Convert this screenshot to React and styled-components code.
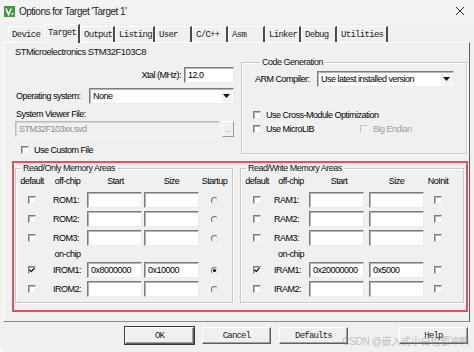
import styled, { createGlobalStyle, css } from "styled-components";

const SANS = `"Liberation Sans", Arial, sans-serif`;
const MONO = `"Liberation Mono", "Courier New", monospace`;

const GlobalStyle = createGlobalStyle`
  html, body {
    margin: 0;
    padding: 0;
    background: #ffffff;
  }
  * {
    box-sizing: border-box;
  }
`;

const Window = styled.div`
  width: 474px;
  height: 352px;
  background: #f0f0f0;
  display: flex;
  flex-direction: column;
  position: relative;
  overflow: hidden;
  border-bottom-left-radius: 6px;
  font-family: ${SANS};
  font-size: 9px;
  letter-spacing: -0.5px;
  color: #000;
`;

const TitleBar = styled.div`
  height: 22px;
  display: flex;
  align-items: center;
  padding: 0 9px 0 4px;
  background: #f3f3f3;
`;

const Title = styled.span`
  flex: 1;
  margin-left: 4px;
  font-size: 10px;
  color: #1b1b1b;
`;

const TabStrip = styled.div`
  height: 20px;
  display: flex;
  align-items: flex-end;
  padding-left: 8px;
`;

const Tab = styled.div`
  position: relative;
  z-index: ${(p) => (p.$active ? 1 : 0)};
  width: ${(p) => p.$w}px;
  height: ${(p) => (p.$active ? 19 : 16)}px;
  margin-bottom: ${(p) => (p.$active ? -1 : 0)}px;
  padding: ${(p) => (p.$active ? "0 0 2px 3px" : "0 0 0 3px")};
  display: flex;
  align-items: center;
  background: #f0f0f0;
  border-top: 1px solid #ffffff;
  border-left: 1px solid #ffffff;
  border-right: 2px solid ${(p) => (p.$shadow ? "#4a4a4a" : "transparent")};
  font-family: ${MONO};
  font-size: 9px;
  letter-spacing: -0.7px;
  color: #222;
  white-space: nowrap;
`;

const Panel = styled.div`
  margin: 0 4px 0 3px;
  padding: 3px 1px 9px 8px;
  border-top: 1px solid #ffffff;
  border-left: 1px solid #ffffff;
  border-right: 1px solid #5c5c5c;
  border-bottom: 1px solid #8c8c8c;
`;

const TopSection = styled.div`
  display: grid;
  grid-template-columns: 222px 226px;
  column-gap: 7px;
  align-items: start;
`;

const LeftCol = styled.div`
  display: flex;
  flex-direction: column;
  padding-left: 3px;
`;

const Text = styled.div`
  line-height: 12px;
  white-space: nowrap;
  padding-left: ${(p) => p.$indent || 0}px;
  color: ${(p) => (p.$disabled ? "#a0a0a0" : "#000")};
`;

const DeviceName = styled(Text)`
  font-size: 9.4px;
  color: #111;
`;

const XtalRow = styled.div`
  margin-top: 9px;
  height: 16px;
  display: flex;
  justify-content: flex-end;
  align-items: center;
  gap: 3px;
`;

const LabeledRow = styled.div`
  margin-top: ${(p) => p.$top || 0}px;
  height: 16px;
  display: grid;
  grid-template-columns: ${(p) => p.$cols};
  align-items: center;
  white-space: nowrap;
`;

const FieldLabel = styled(Text)`
  margin-top: 4px;
  padding-left: 1px;
`;

const BrowseRow = styled.div`
  margin-top: 1px;
  display: flex;
  gap: 2px;
`;

const sunken = css`
  background: #ffffff;
  border: 1px solid;
  border-color: #7d7d7d #ececec #ececec #7d7d7d;
  box-shadow: inset 1px 1px 0 #b4b4b4;
`;

const TextBox = styled.div`
  ${sunken};
  width: ${(p) => p.$w || "auto"};
  flex: ${(p) => (p.$w ? "none" : 1)};
  height: 16px;
  padding: 1px 0 0 3px;
  line-height: 12px;
  white-space: nowrap;
  overflow: hidden;
  ${(p) =>
    p.$disabled &&
    css`
      background: #f0f0f0;
      color: #8e8e8e;
      border-color: #bcbcbc #f4f4f4 #f4f4f4 #bcbcbc;
      box-shadow: inset 1px 1px 0 #d4d4d4;
    `}
`;

const SelectBox = styled.div`
  ${sunken};
  height: 16px;
  display: flex;
  align-items: center;
  padding: 0 1px 0 3px;
`;

const SelectValue = styled.span`
  flex: 1;
  white-space: nowrap;
`;

const DropArrow = styled.span`
  width: 11px;
  height: 12px;
  display: flex;
  align-items: center;
  justify-content: center;
  background: #f4f4f4;
`;

const BrowseButton = styled.div`
  width: 12px;
  height: 16px;
  display: flex;
  align-items: flex-end;
  justify-content: center;
  padding-bottom: 3px;
  background: #f0f0f0;
  border: 1px solid;
  border-color: #ffffff #9a9a9a #9a9a9a #ffffff;
  font-size: 7px;
  letter-spacing: 0;
  line-height: 6px;
  color: #8a8a8a;
`;

const CheckRow = styled.div`
  margin-top: ${(p) => p.$top || 0}px;
  margin-left: ${(p) => p.$indent || 0}px;
  height: 12px;
  display: flex;
  align-items: center;
  gap: 5px;
  white-space: nowrap;
`;

const Box = styled.span`
  ${sunken};
  width: 8px;
  height: 8px;
  flex: none;
  display: flex;
  align-items: center;
  justify-content: center;
  ${(p) =>
    p.$disabled &&
    css`
      background: #f0f0f0;
      border-color: #c4c4c4 #f6f6f6 #f6f6f6 #c4c4c4;
      box-shadow: none;
    `}
`;

const Radio = styled.span`
  width: 7px;
  height: 7px;
  border-radius: 50%;
  border: 1px solid;
  border-color: #6f6f6f #e8e8e8 #e8e8e8 #6f6f6f;
  background: #f0f0f0;
  display: grid;
  place-items: center;
  &::after {
    content: "";
    width: 3px;
    height: 3px;
    border-radius: 50%;
    background: ${(p) => (p.$on ? "#000" : "transparent")};
  }
`;

const Group = styled.fieldset`
  margin: ${(p) => p.$top || 0}px 0 0;
  padding: ${(p) => p.$pad};
  min-width: 0;
  border: 1px solid #c9c9c9;
  box-shadow: 1px 1px 0 #ffffff, inset 1px 1px 0 #ffffff;
`;

const Legend = styled.legend`
  margin-left: 5px;
  padding: 0 2px;
  line-height: ${(p) => p.$lh || 12}px;
  color: #111;
  white-space: nowrap;
`;

const CompilerRow = styled.div`
  height: 16px;
  display: grid;
  grid-template-columns: 62px 137px;
  align-items: center;
  white-space: nowrap;
`;

const EndianRow = styled.div`
  margin-top: 2px;
  margin-left: -2px;
  display: grid;
  grid-template-columns: 107px auto;
`;

const RedBox = styled.div`
  margin-top: 5px;
  padding: 0 1px 7px;
  border: 2px solid #e0525e;
  display: grid;
  grid-template-columns: 218px 224px;
  column-gap: 7px;
`;

const MemGrid = styled.div`
  display: grid;
  grid-template-columns: ${(p) => p.$cols};
  grid-template-rows: 13px 16px 16px 16px 10px 16px 16px;
  row-gap: 3px;
  align-items: center;
`;

const Head = styled.div`
  align-self: start;
  justify-self: center;
  line-height: 10px;
  white-space: nowrap;
`;

const Cell = styled.div`
  justify-self: ${(p) => p.$align || "center"};
  padding-left: ${(p) => p.$indent || 0}px;
  line-height: 10px;
  white-space: nowrap;
`;

const ButtonRow = styled.div`
  display: flex;
  gap: 8px;
  padding: 5px 6px 0 125px;
`;

const Button = styled.div`
  width: 69px;
  height: 17px;
  margin-left: ${(p) => (p.$push ? "auto" : 0)};
  display: flex;
  align-items: center;
  justify-content: center;
  background: #f0f0f0;
  border: 1px solid;
  border-color: #ffffff #5e5e5e #5e5e5e #ffffff;
  box-shadow: ${(p) =>
    p.$default ? "0 0 0 1px #3a3a3a, inset -1px -1px 0 #a0a0a0" : "inset -1px -1px 0 #a0a0a0"};
  font-family: ${MONO};
  font-size: 9px;
  letter-spacing: -0.8px;
  color: #222;
`;

const Watermark = styled.div`
  position: absolute;
  right: 5px;
  bottom: 4px;
  font-family: "Liberation Sans", "Noto Sans CJK SC", sans-serif;
  font-size: 10px;
  letter-spacing: -0.3px;
  color: rgba(140, 140, 140, 0.5);
  white-space: nowrap;
`;

const Check = ({ on, disabled }) => (
  <Box $disabled={disabled}>
    {on && (
      <svg width="6" height="6" viewBox="0 0 6 6">
        <path d="M0.6 2.8 L2.3 4.6 L5.4 1" stroke="#111" strokeWidth="1.3" fill="none" />
      </svg>
    )}
  </Box>
);

const Select = ({ value }) => (
  <SelectBox>
    <SelectValue>{value}</SelectValue>
    <DropArrow>
      <svg width="7" height="4" viewBox="0 0 7 4">
        <path d="M0 0 H7 L3.5 4 Z" fill="#111" />
      </svg>
    </DropArrow>
  </SelectBox>
);

const tabs = [
  { name: "Device", w: 36 },
  { name: "Target", w: 36 },
  { name: "Output", w: 35 },
  { name: "Listing", w: 40 },
  { name: "User", w: 37 },
  { name: "C/C++", w: 36 },
  { name: "Asm", w: 37 },
  { name: "Linker", w: 36 },
  { name: "Debug", w: 36 },
  { name: "Utilities", w: 51 },
];

const romRows = [
  { name: "ROM1:", def: false, start: "", size: "", last: false },
  { name: "ROM2:", def: false, start: "", size: "", last: false },
  { name: "ROM3:", def: false, start: "", size: "", last: false },
  null,
  { name: "IROM1:", def: true, start: "0x8000000", size: "0x10000", last: true },
  { name: "IROM2:", def: false, start: "", size: "", last: false },
];

const ramRows = [
  { name: "RAM1:", def: false, start: "", size: "" },
  { name: "RAM2:", def: false, start: "", size: "" },
  { name: "RAM3:", def: false, start: "", size: "" },
  null,
  { name: "IRAM1:", def: true, start: "0x20000000", size: "0x5000" },
  { name: "IRAM2:", def: false, start: "", size: "" },
];

const MemoryArea = ({ title, cols, indent, lastHead, rows, renderLast }) => (
  <Group $pad="3px 2px 5px 0">
    <Legend $lh={10}>{title}</Legend>
    <MemGrid $cols={cols}>
      <Head>default</Head>
      <Head>off-chip</Head>
      <Head>Start</Head>
      <Head>Size</Head>
      <Head>{lastHead}</Head>
      {rows.map((r, i) =>
        r
          ? [
              <Cell key={`d${i}`}>
                <Check on={r.def} />
              </Cell>,
              <Cell key={`n${i}`} $align="start" $indent={indent}>
                {r.name}
              </Cell>,
              <TextBox key={`s${i}`} $w="55px">
                {r.start}
              </TextBox>,
              <TextBox key={`z${i}`} $w="55px">
                {r.size}
              </TextBox>,
              <Cell key={`l${i}`}>{renderLast(r)}</Cell>,
            ]
          : [
              <span key={`e${i}`} />,
              <Cell key={`o${i}`}>on-chip</Cell>,
              <span key={`f${i}`} />,
              <span key={`g${i}`} />,
              <span key={`h${i}`} />,
            ]
      )}
    </MemGrid>
  </Group>
);

export default function App() {
  return (
    <>
      <GlobalStyle />
      <Window>
        <TitleBar>
          <svg width="11" height="11" viewBox="0 0 11 11">
            <rect width="11" height="11" fill="#3d9a3f" />
            <path d="M2 2.5 L4.6 8.5 L7.2 2.5" stroke="#fff" strokeWidth="1.5" fill="none" />
            <rect x="7.6" y="7" width="1.8" height="1.8" fill="#fff" />
          </svg>
          <Title>Options for Target 'Target 1'</Title>
          <svg width="10" height="10" viewBox="0 0 10 10">
            <path d="M1 1 L9 9 M9 1 L1 9" stroke="#2b2b2b" strokeWidth="1" />
          </svg>
        </TitleBar>

        <TabStrip>
          {tabs.map((t, i) => (
            <Tab key={t.name} $w={t.w} $active={i === 1} $shadow={i !== 0}>
              {t.name}
            </Tab>
          ))}
        </TabStrip>

        <Panel>
          <TopSection>
            <LeftCol>
              <DeviceName>STMicroelectronics STM32F103C8</DeviceName>
              <XtalRow>
                <span>Xtal (MHz):</span>
                <TextBox $w="50px">12.0</TextBox>
              </XtalRow>
              <LabeledRow $top={5} $cols="74px 1fr">
                <Text $indent={1}>Operating system:</Text>
                <Select value="None" />
              </LabeledRow>
              <FieldLabel>System Viewer File:</FieldLabel>
              <BrowseRow>
                <TextBox $disabled>STM32F103xx.svd</TextBox>
                <BrowseButton>...</BrowseButton>
              </BrowseRow>
              <CheckRow $top={7} $indent={6}>
                <Check />
                <span>Use Custom File</span>
              </CheckRow>
            </LeftCol>

            <Group $top={10} $pad="3px 10px 18px 13px">
              <Legend>Code Generation</Legend>
              <CompilerRow>
                <span>ARM Compiler:</span>
                <Select value="Use latest installed version" />
              </CompilerRow>
              <CheckRow $top={22} $indent={-2}>
                <Check />
                <span>Use Cross-Module Optimization</span>
              </CheckRow>
              <EndianRow>
                <CheckRow>
                  <Check />
                  <span>Use MicroLIB</span>
                </CheckRow>
                <CheckRow>
                  <Check disabled />
                  <Text $disabled>Big Endian</Text>
                </CheckRow>
              </EndianRow>
            </Group>
          </TopSection>

          <RedBox>
            <MemoryArea
              title="Read/Only Memory Areas"
              cols="32px 39px 57px 55px 31px"
              indent={5}
              lastHead="Startup"
              rows={romRows}
              renderLast={(r) => <Radio $on={r.last} />}
            />
            <MemoryArea
              title="Read/Write Memory Areas"
              cols="32px 36px 60px 55px 28px"
              indent={1}
              lastHead="NoInit"
              rows={ramRows}
              renderLast={() => <Check />}
            />
          </RedBox>
        </Panel>

        <ButtonRow>
          <Button $default>OK</Button>
          <Button>Cancel</Button>
          <Button>Defaults</Button>
          <Button $push>Help</Button>
        </ButtonRow>

        <Watermark>CSDN @嵌入式小白也要冲鸭</Watermark>
      </Window>
    </>
  );
}
